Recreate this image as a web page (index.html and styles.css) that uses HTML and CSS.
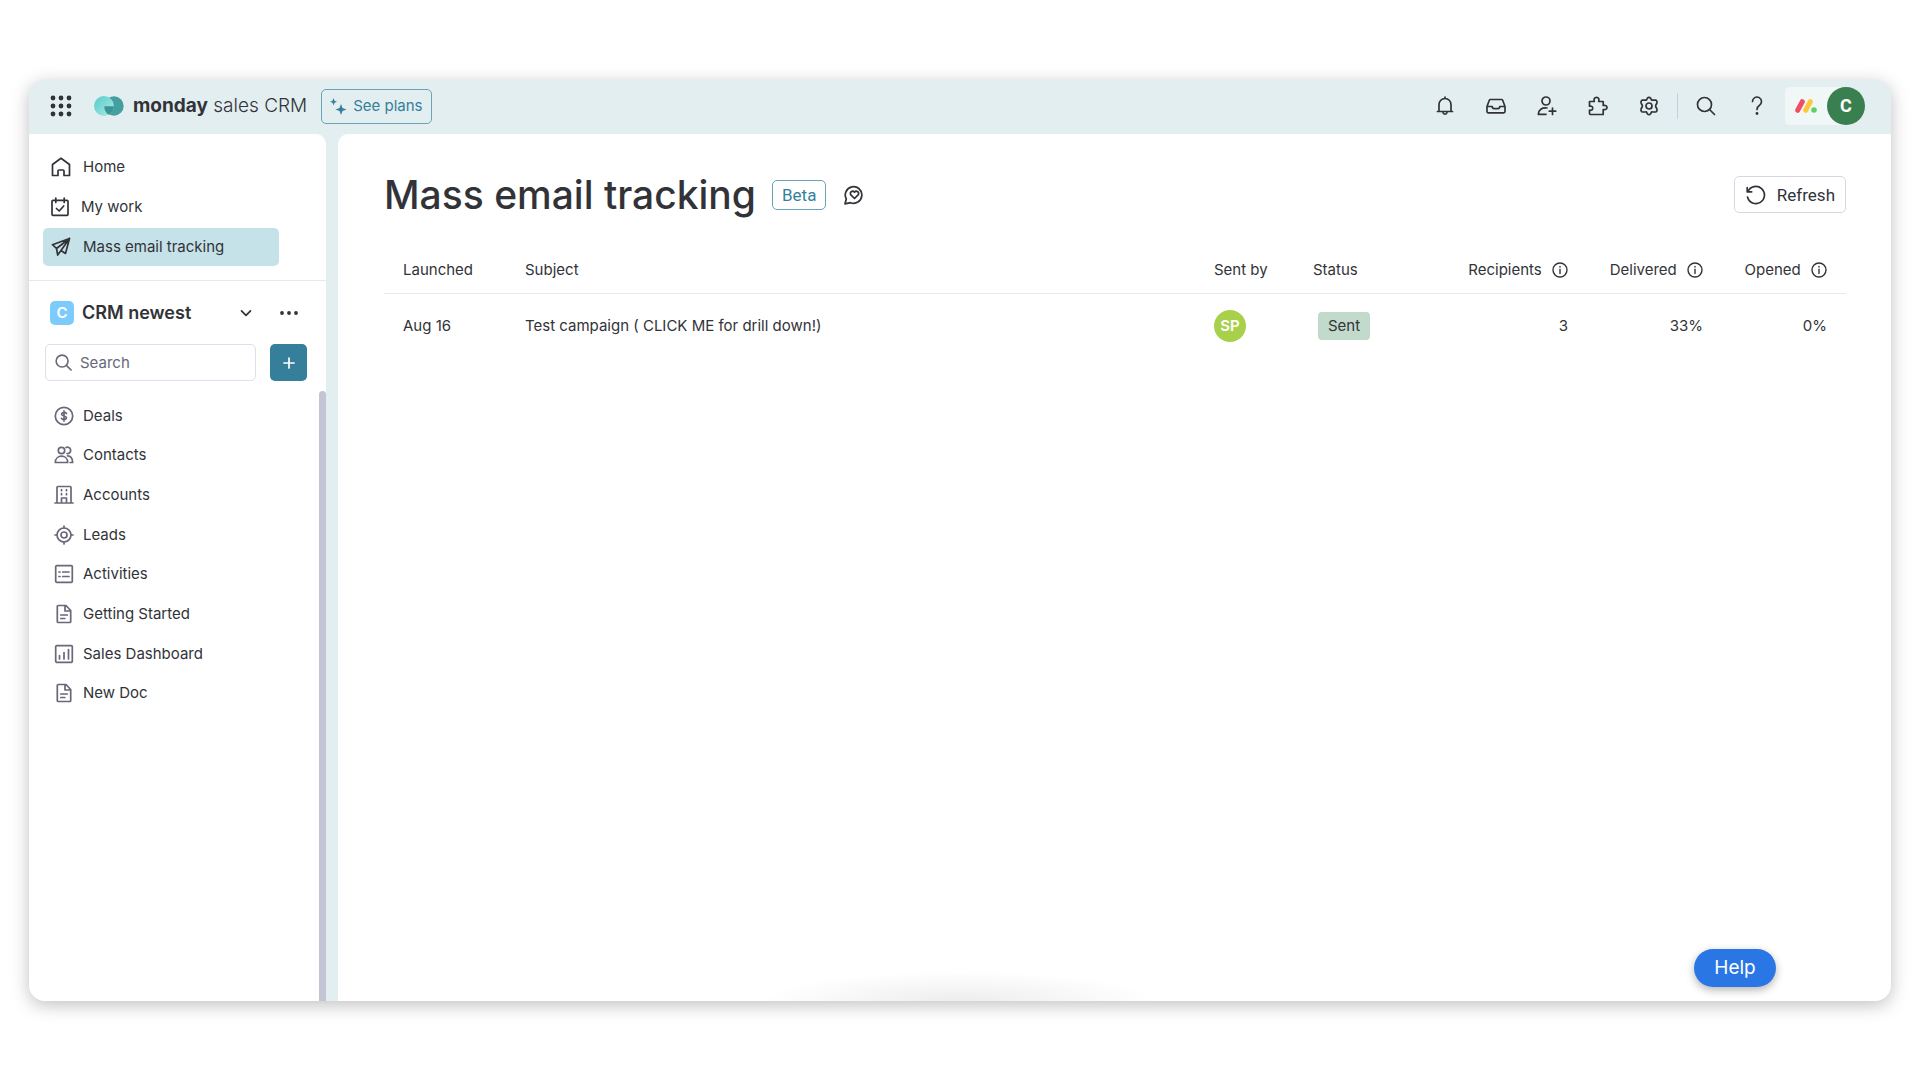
FILE: index.html
```
<!DOCTYPE html>
<html lang="en">
<head>
    <meta charset="UTF-8">
    <meta name="viewport" content="width=device-width, initial-scale=1.0">
    <title>Mass email tracking</title>
    <link rel="stylesheet" href="styles.css">
</head>
<body>
    <div class="app">
        <!-- Top bar -->
        <header class="topbar">
            <button class="icon-btn apps-btn" aria-label="Apps">
                <svg width="22" height="22" viewBox="0 0 22 22">
                    <circle cx="3" cy="3" r="2.4"/><circle cx="11" cy="3" r="2.4"/><circle cx="19" cy="3" r="2.4"/>
                    <circle cx="3" cy="11" r="2.4"/><circle cx="11" cy="11" r="2.4"/><circle cx="19" cy="11" r="2.4"/>
                    <circle cx="3" cy="19" r="2.4"/><circle cx="11" cy="19" r="2.4"/><circle cx="19" cy="19" r="2.4"/>
                </svg>
            </button>
            <a class="brand" href="#">
                <svg width="30" height="20" viewBox="0 0 30 20">
                    <defs>
                        <linearGradient id="brandLight" x1="0" y1="0" x2="1" y2="1">
                            <stop offset="0" stop-color="#4fcdc9"/>
                            <stop offset="1" stop-color="#b5e8e6"/>
                        </linearGradient>
                    </defs>
                    <circle cx="20" cy="10" r="9.7" fill="#449fa0"/>
                    <circle cx="10" cy="10" r="10" fill="url(#brandLight)"/>
                    <path d="M10.3 10.2H20a10 10 0 0 1-5.3 8.5c-2.8-1.7-4.4-4.7-4.4-8.5z" fill="#3b9597"/>
                </svg>
                <span class="brand-name"><b>monday</b> sales CRM</span>
            </a>
            <button class="plans-btn">
                <svg width="17" height="17" viewBox="0 0 17 17">
                    <path d="M3.5 0l1 2.7L7 3.7 4.5 4.7l-1 2.7-1-2.7L0 3.7l2.5-1zM11 6l1.5 4L16.5 11.5 12.5 13 11 17 9.5 13 5.5 11.5 9.5 10z"/>
                </svg>
                See plans
            </button>
            <nav class="tools">
                <button class="icon-btn" aria-label="Notifications">
                    <svg width="20" height="20" viewBox="0 0 20 20"><path d="M10 1v1.5M2.5 15.5h15M4 15.5V8.5a6 6 0 0 1 12 0v7M8 16.5c.3 2.2 3.7 2.2 4 0"/></svg>
                </button>
                <button class="icon-btn" aria-label="Inbox">
                    <svg width="20" height="20" viewBox="0 0 20 20"><path d="M4.5 3.5h11c.6 0 1 .3 1.2.8L19 10.5v5c0 .8-.5 1.3-1.3 1.3H2.3c-.8 0-1.3-.5-1.3-1.3v-5l2.3-6.2c.2-.5.6-.8 1.2-.8zM1 10.5h5.3c0 1.4.7 2.2 1.7 2.2h4c1 0 1.7-.8 1.7-2.2H19"/></svg>
                </button>
                <button class="icon-btn" aria-label="Invite members">
                    <svg width="20" height="20" viewBox="0 0 20 20"><circle cx="9" cy="5" r="4"/><path d="M10 12C5 11.3 1.5 13.8 1.3 18.3H9M15.5 12v6.4M12.3 15.2h6.4"/></svg>
                </button>
                <button class="icon-btn" aria-label="Apps marketplace">
                    <svg width="20" height="20" viewBox="0 0 20 20"><path d="M1.5 5.5H6.3C5.5 3 6.5 1.3 8.5 1.3s3 1.7 2.2 4.2h4.5V9.5c2.3-.6 3.8.3 3.8 2s-1.5 2.6-3.8 2V18.500H2.7a1.200 1.200 0 0 1-1.200-1.200v-3.100c2 .4 3.200-.4 3.200-2s-1.200-2.500-3.200-2z"/></svg>
                </button>
                <button class="icon-btn" aria-label="Settings">
                    <svg width="20" height="20" viewBox="0 0 20 20"><path d="M8.3 2.3Q10 .3 11.7 2.3L12.6 4.1 14.8 4 17 4.2Q18.6 5.5 17.9 7.3L16.7 9.2V10.8L17.9 12.7Q18.6 14.5 17 15.8L14.8 16 12.6 15.9 11.7 17.7Q10 19.7 8.3 17.7L7.4 15.9 5.2 16 3 15.8Q1.4 14.5 2.1 12.7L3.3 10.8V9.2L2.1 7.3Q1.4 5.5 3 4.2L5.2 4 7.4 4.1z"/><circle cx="10" cy="10" r="3"/></svg>
                </button>
                <span class="separator"></span>
                <button class="icon-btn" aria-label="Search everything">
                    <svg width="20" height="20" viewBox="0 0 20 20"><circle cx="8.5" cy="8.5" r="7"/><path d="M13.5 13.5L18.5 18.5"/></svg>
                </button>
                <button class="icon-btn" aria-label="Help center">
                    <svg width="20" height="20" viewBox="0 0 20 20"><path d="M5.5 5.5a4.5 4.5 0 1 1 6.8 3.9C10.7 10.4 10 11 10 13.5"/><circle class="solid" cx="10" cy="17.5" r="1.4"/></svg>
                </button>
            </nav>
            <button class="profile" aria-label="Profile">
                <span class="profile-logo">
                    <svg width="22" height="14" viewBox="0 0 22 14">
                        <path class="bar" d="M2.7 11.3L7.3 2.7" stroke="#f04e63"/>
                        <path class="bar" d="M10.7 11.3L15.3 2.7" stroke="#fbc93d"/>
                        <circle cx="19" cy="11" r="2.8" fill="#5ad45f" stroke="none"/>
                    </svg>
                </span>
                <span class="avatar">C</span>
            </button>
        </header>

        <div class="body">
            <!-- Left menu -->
            <aside class="sidebar">
                <nav class="main-nav">
                    <a href="#">
                        <svg width="20" height="20" viewBox="0 0 20 20"><path d="M1.5 7.5L10 1.3l8.5 6.2V18.5h-5.500v-4.500a1 1 0 0 0-1-1H8a1 1 0 0 0-1 1v4.500H1.500z"/></svg>
                        Home
                    </a>
                    <a href="#">
                        <svg width="18" height="20" viewBox="0 0 18 20"><rect x="1" y="3.3" width="16" height="15" rx="1"/><path d="M4.8 1v4.5M13.2 1v4.5M5.5 11.5l2.7 2.5 4.5-5"/></svg>
                        My work
                    </a>
                    <a href="#" class="active">
                        <svg width="20" height="20" viewBox="0 0 20 20"><path d="M1.5 7.7L18.5 1.5 14.5 16.5 10 13.5 6.7 18 5.5 11.5zM18.5 1.5L5.5 11.5M18.5 1.5L10 13.5"/></svg>
                        Mass email tracking
                    </a>
                </nav>

                <div class="workspace">
                    <span class="workspace-icon">C</span>
                    <span class="workspace-name">CRM newest</span>
                    <button class="icon-btn" aria-label="Switch workspace">
                        <svg width="12" height="12" viewBox="0 0 12 12"><path d="M1.5 3.8L6 8.3l4.5-4.5"/></svg>
                    </button>
                    <button class="icon-btn" aria-label="Workspace menu">
                        <svg width="18" height="12" viewBox="0 0 18 12"><circle class="solid" cx="2" cy="6" r="1.9"/><circle class="solid" cx="9" cy="6" r="1.9"/><circle class="solid" cx="16" cy="6" r="1.9"/></svg>
                    </button>
                </div>

                <div class="search-row">
                    <label class="search-box">
                        <svg width="17" height="17" viewBox="0 0 18 18"><circle cx="7.5" cy="7.5" r="6.3"/><path d="M12 12l5 5"/></svg>
                        <input type="text" placeholder="Search" aria-label="Search">
                    </label>
                    <button class="add-btn" aria-label="Add item">
                        <svg width="12" height="12" viewBox="0 0 12 12"><path d="M6 1v10M1 6h10"/></svg>
                    </button>
                </div>

                <div class="boards-area">
                    <nav class="boards">
                        <a href="#">
                            <svg width="20" height="20" viewBox="0 0 20 20"><circle cx="10" cy="10" r="8.7"/><path d="M12.4 7.5C11.5 6 7.7 6.1 7.7 8.2c0 2.3 4.7 1.3 4.7 3.6 0 2.1-3.9 2.3-4.9.5M10 4.9v10.2"/></svg>
                            Deals
                        </a>
                        <a href="#">
                            <svg width="20" height="20" viewBox="0 0 20 20"><circle cx="7.5" cy="5.5" r="3.2"/><path d="M1.3 17.5c0-8.4 12.4-8.4 12.4 0zM12 2.5a3.2 3.2 0 1 1 1 6M13.5 10.8c3 0 5 2.3 5.2 6.7h-2.5"/></svg>
                            Contacts
                        </a>
                        <a href="#">
                            <svg width="20" height="20" viewBox="0 0 20 20"><path d="M1 18h18M3 18V2.5a1 1 0 0 1 1-1h12a1 1 0 0 1 1 1V18M7.5 18v-5h5v5M7.5 4.7v1M12.5 4.7v1M7.5 8.7v1M12.5 8.7v1"/></svg>
                            Accounts
                        </a>
                        <a href="#">
                            <svg width="20" height="20" viewBox="0 0 20 20"><circle cx="10" cy="10" r="7"/><circle cx="10" cy="10" r="3"/><path d="M10 1V3M10 17v2M1 10H3M17 10h2"/></svg>
                            Leads
                        </a>
                        <a href="#">
                            <svg width="20" height="20" viewBox="0 0 20 20"><rect x="1.7" y="1.7" width="16.6" height="16.6" rx="1"/><path d="M5 8h1M8.7 8h6.3M5 12.5h1M8.7 12.5h6.3"/></svg>
                            Activities
                        </a>
                        <a href="#">
                            <svg width="20" height="20" viewBox="0 0 20 20"><path d="M12 1.5H4.3a1 1 0 0 0-1 1v15a1 1 0 0 0 1 1h11.4a1 1 0 0 0 1-1V6.5zM11 1.5v5.5h5.7M6.8 11h6.5M6.8 14.5h4"/></svg>
                            Getting Started
                        </a>
                        <a href="#">
                            <svg width="20" height="20" viewBox="0 0 20 20"><rect x="1.7" y="1.7" width="16.6" height="16.6" rx="1"/><path d="M5.5 11.5v3.5M10 8.5v6.5M14.5 5.5v9.5"/></svg>
                            Sales Dashboard
                        </a>
                        <a href="#">
                            <svg width="20" height="20" viewBox="0 0 20 20"><path d="M12 1.5H4.3a1 1 0 0 0-1 1v15a1 1 0 0 0 1 1h11.4a1 1 0 0 0 1-1V6.5zM11 1.5v5.5h5.7M6.8 11h6.5M6.8 14.5h4"/></svg>
                            New Doc
                        </a>
                    </nav>
                    <div class="scrollbar"></div>
                </div>
            </aside>

            <!-- Page content -->
            <main class="content">
                <div class="page-header">
                    <h1>Mass email tracking</h1>
                    <span class="beta">Beta</span>
                    <button class="icon-btn" aria-label="Send feedback">
                        <svg width="20" height="20" viewBox="0 0 20 20"><path d="M1 18.8L2.3 14A8.3 8.3 0 1 1 6.5 17.7z"/><path d="M10.5 13.5L6.9 9.9C5 7.6 8.5 4.7 10.5 7.2c2-2.5 5.5.4 3.6 2.7z"/></svg>
                    </button>
                    <button class="refresh-btn">
                        <svg width="20" height="20" viewBox="0 0 20 20"><path d="M1.2 2.5v4.3h4.5M2 6.5A8.6 8.6 0 1 1 1.5 12"/></svg>
                        Refresh
                    </button>
                </div>

                <table class="campaigns">
                    <thead>
                        <tr>
                            <th class="launched">Launched</th>
                            <th>Subject</th>
                            <th class="sent-by">Sent by</th>
                            <th class="status">Status</th>
                            <th class="recipients num">Recipients <svg width="16" height="16" viewBox="0 0 16 16"><circle cx="8" cy="8" r="7"/><path d="M8 7.3v4.2M8 4.5v.5"/></svg></th>
                            <th class="delivered num">Delivered <svg width="16" height="16" viewBox="0 0 16 16"><circle cx="8" cy="8" r="7"/><path d="M8 7.3v4.2M8 4.5v.5"/></svg></th>
                            <th class="opened num">Opened <svg width="16" height="16" viewBox="0 0 16 16"><circle cx="8" cy="8" r="7"/><path d="M8 7.3v4.2M8 4.5v.5"/></svg></th>
                        </tr>
                    </thead>
                    <tbody>
                        <tr>
                            <td>Aug 16</td>
                            <td>Test campaign ( CLICK ME for drill down!)</td>
                            <td><span class="sender">SP</span></td>
                            <td><span class="tag">Sent</span></td>
                            <td class="num">3</td>
                            <td class="num">33%</td>
                            <td class="num">0%</td>
                        </tr>
                    </tbody>
                </table>

                <button class="help-btn">Help</button>
            </main>
        </div>
    </div>
</body>
</html>
```
FILE: styles.css
```
* {
    box-sizing: border-box;
}

body {
    margin: 0;
    padding: 80px 29px 79px;
    min-height: 100vh;
    display: flex;
    background-color: #fff;
    color: #323338;
    font-family: Inter, sans-serif;
    font-size: 15px;
    line-height: 20px;
}

a {
    color: inherit;
    text-decoration: none;
}

button {
    padding: 0;
    border: none;
    background: none;
    color: inherit;
    font: inherit;
    cursor: pointer;
}

svg {
    flex-shrink: 0;
    fill: none;
    stroke: currentColor;
    stroke-width: 1.7;
    stroke-linejoin: round;
    stroke-linecap: round;
}

.solid {
    fill: currentColor;
    stroke: none;
}

.icon-btn {
    display: flex;
    align-items: center;
    justify-content: center;
}

.app {
    flex: 1;
    display: flex;
    flex-direction: column;
    border-radius: 16px;
    overflow: hidden;
    background-color: #e3eef0;
    box-shadow: 0 4px 18px rgba(0, 0, 0, 0.25);
}

/* Top bar */
.topbar {
    height: 54px;
    padding: 0 26px 2px 21px;
    display: flex;
    align-items: center;
}

.apps-btn svg,
.brand svg,
.plans-btn svg {
    stroke: none;
}

.apps-btn svg,
.plans-btn svg {
    fill: currentColor;
}

.brand {
    display: flex;
    align-items: center;
    gap: 9px;
    margin-left: 22px;
}

.brand-name {
    font-size: 19px;
    font-weight: 300;
    line-height: 24px;
}

.brand-name b {
    font-weight: 700;
}

.plans-btn {
    display: flex;
    align-items: center;
    gap: 6px;
    height: 35px;
    margin-left: 14px;
    padding: 0 8px;
    border: 1px solid #6aa3b5;
    border-radius: 5px;
    color: #357f9a;
}

.tools {
    display: flex;
    align-items: center;
    gap: 31px;
    margin-left: auto;
}

.separator {
    width: 1px;
    height: 26px;
    margin: 0 -13px;
    background-color: #c5d0da;
}

.profile {
    display: flex;
    align-items: center;
    margin-left: 18px;
}

.profile-logo {
    display: flex;
    align-items: center;
    width: 60px;
    height: 38px;
    margin-right: -18px;
    padding-left: 10px;
    border-radius: 5px;
    background-color: #f1f7f7;
}

.profile-logo .bar {
    stroke-width: 5;
}

.avatar {
    width: 38px;
    height: 38px;
    border-radius: 50%;
    background-color: #3a7f50;
    color: #fff;
    font-family: Roboto, sans-serif;
    font-size: 18px;
    font-weight: 700;
    line-height: 38px;
}

.body {
    flex: 1;
    display: flex;
    gap: 12px;
}

/* Sidebar */
.sidebar {
    width: 297px;
    display: flex;
    flex-direction: column;
    border-top-right-radius: 10px;
    background-color: #fff;
}

.main-nav {
    display: flex;
    flex-direction: column;
    gap: 2px;
    padding: 14px 47px 14px 14px;
    border-bottom: 1px solid #e6e9ef;
}

.main-nav a {
    display: flex;
    align-items: center;
    gap: 12px;
    height: 38px;
    padding-left: 8px;
    border-radius: 5px;
}

.main-nav .active {
    background-color: #c5e2e8;
}

.workspace {
    display: flex;
    align-items: center;
    gap: 8px;
    padding: 20px 28px 19px 21px;
}

.workspace-icon {
    width: 24px;
    height: 24px;
    border-radius: 5px;
    background-color: #7bccfc;
    color: #fff;
    font-weight: 600;
    line-height: 24px;
    text-align: center;
}

.workspace-name {
    flex: 1;
    font-size: 18px;
    font-weight: 600;
}

.workspace .icon-btn + .icon-btn {
    margin-left: 20px;
}

.search-row {
    display: flex;
    gap: 14px;
    padding: 0 19px 10px 16px;
}

.search-box {
    flex: 1;
    display: flex;
    align-items: center;
    gap: 8px;
    height: 37px;
    padding: 0 9px;
    border: 1px solid #dcdfec;
    border-radius: 5px;
    color: #676879;
}

.search-box input {
    width: 100%;
    padding: 0;
    border: none;
    outline: none;
    color: #323338;
    font: inherit;
}

.search-box input::placeholder {
    color: #676879;
}

.add-btn {
    display: flex;
    align-items: center;
    justify-content: center;
    width: 37px;
    height: 37px;
    border-radius: 5px;
    background-color: #357f9a;
    color: #fff;
}

.boards-area {
    flex: 1;
    display: flex;
}

.boards {
    flex: 1;
    display: grid;
    grid-auto-rows: 1fr;
    height: 317px;
    margin-top: 5px;
    padding-left: 25px;
}

.boards a {
    display: flex;
    align-items: center;
    gap: 9px;
}

.boards svg {
    color: #676879;
}

.scrollbar {
    width: 7px;
    border-radius: 4px 4px 0 0;
    background-color: #c3c4d4;
}

/* Content */
.content {
    flex: 1;
    padding: 42px 45px 14px 46px;
    display: flex;
    flex-direction: column;
    border-top-left-radius: 10px;
    background-color: #fff;
    background-image: radial-gradient(ellipse at center, rgba(0, 0, 0, 0.07), transparent 70%);
    background-size: 400px 60px;
    background-position: 422px calc(100% + 30px);
    background-repeat: no-repeat;
}

.page-header {
    display: flex;
    align-items: center;
    height: 37px;
    margin-bottom: 34px;
}

h1 {
    margin: 0;
    font-size: 39px;
    font-weight: 500;
    line-height: 38px;
}

.beta {
    margin: 0 18px 0 16px;
    padding: 4px 9px;
    border: 1px solid #6aa3b5;
    border-radius: 5px;
    color: #357f9a;
    font-family: Roboto, sans-serif;
    font-size: 17px;
}

.refresh-btn {
    display: flex;
    align-items: center;
    gap: 11px;
    height: 37px;
    margin-left: auto;
    padding: 0 10px 0 11px;
    border: 1px solid #d5d7e3;
    border-radius: 5px;
    font-family: Roboto, sans-serif;
    font-size: 17px;
}

.campaigns {
    width: 100%;
    table-layout: fixed;
    border-collapse: collapse;
}

.campaigns th,
.campaigns td {
    padding: 0 19px;
    text-align: left;
    white-space: nowrap;
}

.campaigns th {
    height: 46px;
    border-bottom: 1px solid #e6e9ef;
    font-weight: 400;
}

.campaigns td {
    height: 66px;
}

.campaigns .num {
    text-align: right;
}

.campaigns th svg {
    margin-left: 6px;
    vertical-align: -3px;
    stroke-width: 1.4;
}

.launched {
    width: 122px;
}

.sent-by {
    width: 99px;
}

.status {
    width: 132px;
}

.recipients {
    width: 161px;
}

.delivered {
    width: 135px;
}

.opened {
    width: 124px;
}

.sender {
    display: block;
    width: 32px;
    height: 32px;
    border-radius: 50%;
    background-color: #a9d04a;
    color: #fff;
    font-weight: 600;
    line-height: 32px;
    text-align: center;
}

.tag {
    display: inline-block;
    margin-left: 5px;
    padding: 4px 10px;
    border-radius: 4px;
    background-color: #c2dacb;
}

.help-btn {
    align-self: flex-end;
    width: 82px;
    height: 38px;
    margin: auto 70px 0 0;
    border-radius: 19px;
    background-color: #2b76e5;
    color: #fff;
    font-size: 19px;
    box-shadow: 0 3px 8px rgba(0, 0, 0, 0.3);
}
```
